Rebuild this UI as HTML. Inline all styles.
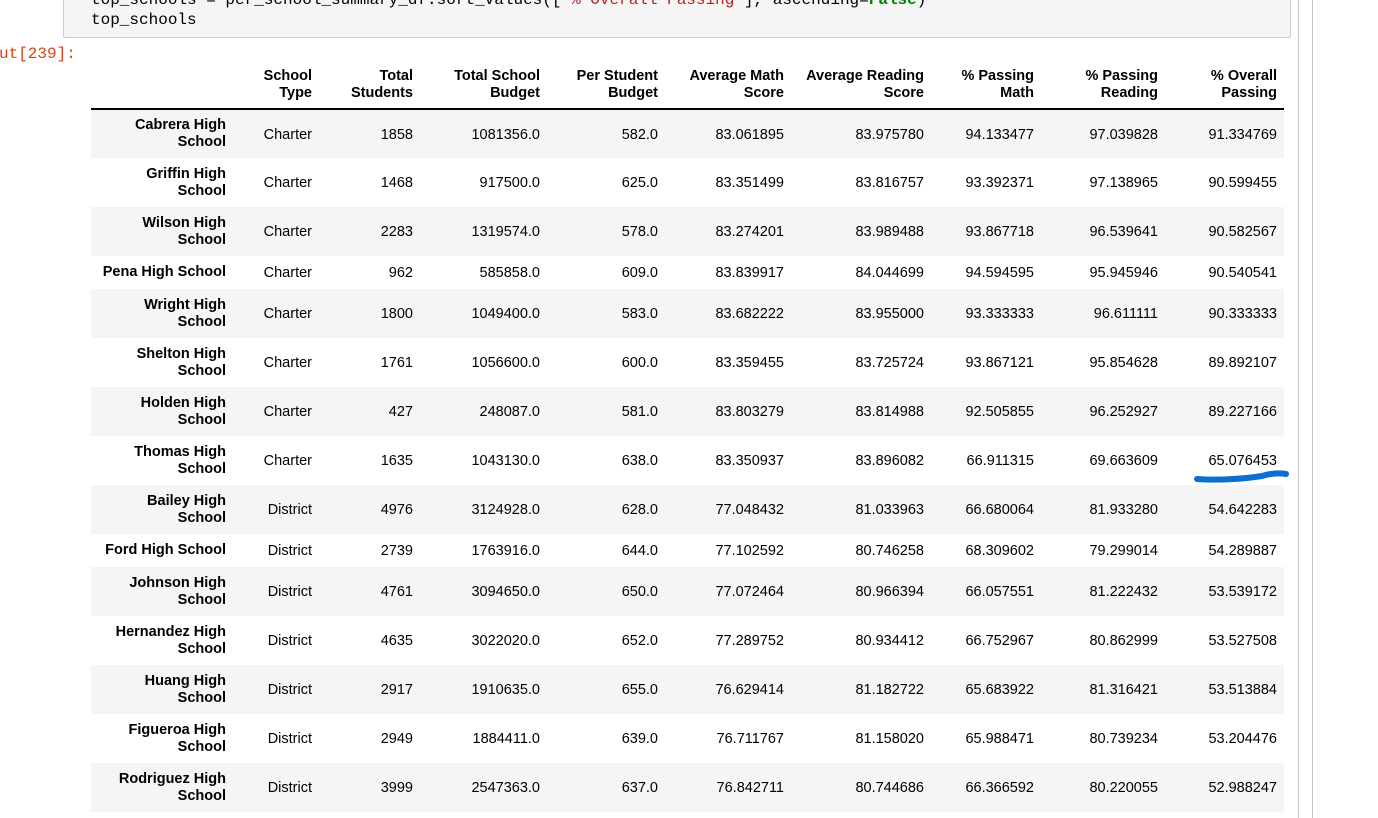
<!DOCTYPE html>
<html><head><meta charset="utf-8"><style>
body{margin:0;width:1378px;height:818px;background:#fff;overflow:hidden;position:relative;font-family:"Liberation Sans",Arial,sans-serif;}
.code{position:absolute;left:63px;top:-10px;width:1226px;height:46px;background:#f5f5f5;border:1px solid #cfcfcf;border-radius:2px;}
.code pre{margin:0;position:absolute;left:27px;top:-1px;font-family:"Liberation Mono",monospace;font-size:16px;line-height:20px;color:#000;}
.out{position:absolute;left:-1px;top:45px;font-family:"Liberation Mono",monospace;font-size:16px;color:#d84315;}
.vl{position:absolute;top:0;width:1px;height:818px;background:#c8c8c8;}
table{position:absolute;left:91px;top:60px;border-collapse:collapse;table-layout:fixed;font-size:14.5px;color:#000;}
th,td{text-align:right;padding:0 7px 0 0;line-height:17px;}
thead th{height:42px;vertical-align:bottom;padding-bottom:6px;border-bottom:2px solid #000;}
tbody tr{height:49px;}
tbody tr.s{height:33px;}
tbody tr:nth-child(odd){background:#f5f5f5;}
tbody th{font-weight:bold;}
td{padding-top:2px;}
</style></head><body>
<div class="code"><pre>top_schools = per_school_summary_df.sort_values([<span style="color:#ba2121">"% Overall Passing"</span>], ascending=<span style="color:#008000;font-weight:bold">False</span>)
top_schools</pre></div>
<div class="out">ut[239]:</div>
<div class="vl" style="left:1298px"></div>
<div class="vl" style="left:1312px"></div>
<table>
<colgroup><col style="width:142px"><col style="width:86px"><col style="width:101px"><col style="width:127px"><col style="width:118px"><col style="width:126px"><col style="width:140px"><col style="width:110px"><col style="width:124px"><col style="width:119px"></colgroup>
<thead><tr><th></th><th>School<br>Type</th><th>Total<br>Students</th><th>Total School<br>Budget</th><th>Per Student<br>Budget</th><th>Average Math<br>Score</th><th>Average Reading<br>Score</th><th>% Passing<br>Math</th><th>% Passing<br>Reading</th><th>% Overall<br>Passing</th></tr></thead>
<tbody>
<tr><th>Cabrera High<br>School</th><td>Charter</td><td>1858</td><td>1081356.0</td><td>582.0</td><td>83.061895</td><td>83.975780</td><td>94.133477</td><td>97.039828</td><td>91.334769</td></tr>
<tr><th>Griffin High<br>School</th><td>Charter</td><td>1468</td><td>917500.0</td><td>625.0</td><td>83.351499</td><td>83.816757</td><td>93.392371</td><td>97.138965</td><td>90.599455</td></tr>
<tr><th>Wilson High<br>School</th><td>Charter</td><td>2283</td><td>1319574.0</td><td>578.0</td><td>83.274201</td><td>83.989488</td><td>93.867718</td><td>96.539641</td><td>90.582567</td></tr>
<tr class="s"><th>Pena High School</th><td>Charter</td><td>962</td><td>585858.0</td><td>609.0</td><td>83.839917</td><td>84.044699</td><td>94.594595</td><td>95.945946</td><td>90.540541</td></tr>
<tr><th>Wright High<br>School</th><td>Charter</td><td>1800</td><td>1049400.0</td><td>583.0</td><td>83.682222</td><td>83.955000</td><td>93.333333</td><td>96.611111</td><td>90.333333</td></tr>
<tr><th>Shelton High<br>School</th><td>Charter</td><td>1761</td><td>1056600.0</td><td>600.0</td><td>83.359455</td><td>83.725724</td><td>93.867121</td><td>95.854628</td><td>89.892107</td></tr>
<tr><th>Holden High<br>School</th><td>Charter</td><td>427</td><td>248087.0</td><td>581.0</td><td>83.803279</td><td>83.814988</td><td>92.505855</td><td>96.252927</td><td>89.227166</td></tr>
<tr><th>Thomas High<br>School</th><td>Charter</td><td>1635</td><td>1043130.0</td><td>638.0</td><td>83.350937</td><td>83.896082</td><td>66.911315</td><td>69.663609</td><td>65.076453</td></tr>
<tr><th>Bailey High<br>School</th><td>District</td><td>4976</td><td>3124928.0</td><td>628.0</td><td>77.048432</td><td>81.033963</td><td>66.680064</td><td>81.933280</td><td>54.642283</td></tr>
<tr class="s"><th>Ford High School</th><td>District</td><td>2739</td><td>1763916.0</td><td>644.0</td><td>77.102592</td><td>80.746258</td><td>68.309602</td><td>79.299014</td><td>54.289887</td></tr>
<tr><th>Johnson High<br>School</th><td>District</td><td>4761</td><td>3094650.0</td><td>650.0</td><td>77.072464</td><td>80.966394</td><td>66.057551</td><td>81.222432</td><td>53.539172</td></tr>
<tr><th>Hernandez High<br>School</th><td>District</td><td>4635</td><td>3022020.0</td><td>652.0</td><td>77.289752</td><td>80.934412</td><td>66.752967</td><td>80.862999</td><td>53.527508</td></tr>
<tr><th>Huang High<br>School</th><td>District</td><td>2917</td><td>1910635.0</td><td>655.0</td><td>76.629414</td><td>81.182722</td><td>65.683922</td><td>81.316421</td><td>53.513884</td></tr>
<tr><th>Figueroa High<br>School</th><td>District</td><td>2949</td><td>1884411.0</td><td>639.0</td><td>76.711767</td><td>81.158020</td><td>65.988471</td><td>80.739234</td><td>53.204476</td></tr>
<tr><th>Rodriguez High<br>School</th><td>District</td><td>3999</td><td>2547363.0</td><td>637.0</td><td>76.842711</td><td>80.744686</td><td>66.366592</td><td>80.220055</td><td>52.988247</td></tr>
</tbody></table>
<svg style="position:absolute;left:0;top:0" width="1378" height="818"><path d="M1197 479 C1220 481 1250 478 1262 476 C1272 473 1280 473 1286 474" stroke="#0a6fd0" stroke-width="6" stroke-linecap="round" fill="none"/></svg>
</body></html>
